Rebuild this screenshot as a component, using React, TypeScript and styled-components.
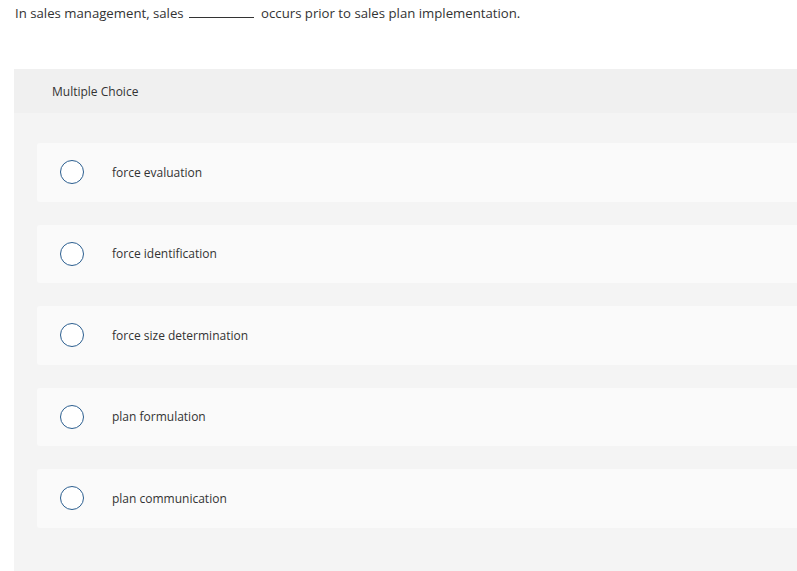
import React from "react";
import styled, { createGlobalStyle } from "styled-components";

const Global = createGlobalStyle`
  html, body { margin: 0; padding: 0; background: #ffffff; }
  body { font-family: "Open Sans", "Liberation Sans", sans-serif; color: #333333; }
`;

const Page = styled.div`
  width: 797px;
  height: 571px;
  overflow: hidden;
  display: flex;
  flex-direction: column;
`;

const Question = styled.p`
  margin: 0;
  padding: 4px 0 0 15px;
  height: 69px;
  box-sizing: border-box;
  font-size: 13.2px;
  line-height: 18px;
  color: #333333;
`;

const Blank = styled.span`
  display: inline-block;
  width: 65px;
  height: 10px;
  border-bottom: 1px solid #333333;
  margin: 0 4px 0 5px;
`;

const Panel = styled.section`
  margin-left: 14px;
  flex: 1;
  background: #f4f4f4;
  display: flex;
  flex-direction: column;
`;

const Header = styled.div`
  height: 44px;
  background: #f0f0f0;
  display: flex;
  align-items: center;
  padding-left: 38px;
  font-size: 12px;
  color: #333333;
`;

const Options = styled.div`
  display: flex;
  flex-direction: column;
  gap: 23px;
  padding: 30px 0 0 23px;
`;

const Option = styled.label`
  height: 58.5px;
  background: #fafafa;
  border-radius: 3px 0 0 3px;
  display: flex;
  align-items: center;
  padding-left: 23px;
  font-size: 12px;
  color: #333333;
  cursor: pointer;
`;

const Radio = styled.span`
  width: 22px;
  height: 22px;
  border-radius: 50%;
  border: 1.5px solid #2b5e8f;
  background: #ffffff;
  flex-shrink: 0;
  margin-right: 28px;
`;

const options = [
  "force evaluation",
  "force identification",
  "force size determination",
  "plan formulation",
  "plan communication",
];

export default function App() {
  return (
    <Page>
      <Global />
      <Question>
        In sales management, sales<Blank /> occurs prior to sales plan implementation.
      </Question>
      <Panel>
        <Header>Multiple Choice</Header>
        <Options>
          {options.map((o) => (
            <Option key={o}>
              <Radio />
              {o}
            </Option>
          ))}
        </Options>
      </Panel>
    </Page>
  );
}
